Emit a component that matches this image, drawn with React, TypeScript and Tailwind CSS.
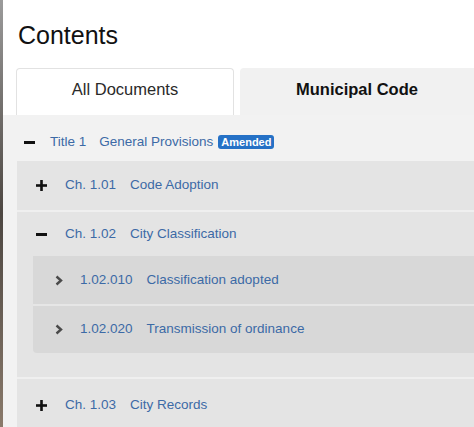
import React, { useState } from 'react';

type Section = { num: string; title: string };
type Chapter = { num: string; title: string; sections?: Section[] };

const chapters: Chapter[] = [
  { num: 'Ch. 1.01', title: 'Code Adoption' },
  {
    num: 'Ch. 1.02',
    title: 'City Classification',
    sections: [
      { num: '1.02.010', title: 'Classification adopted' },
      { num: '1.02.020', title: 'Transmission of ordinance' },
    ],
  },
  { num: 'Ch. 1.03', title: 'City Records' },
];

// header sizing per chapter row (the 2px divider sits on the wrapper)
const chapterHeights = ['h-[49px]', 'h-[44px]', 'h-[49px] pt-[3px]'];

function MinusIcon() {
  return (
    <svg width="11" height="11" viewBox="0 0 11 11" className="shrink-0">
      <rect x="0" y="4" width="11" height="3" fill="#111" />
    </svg>
  );
}

function PlusIcon() {
  return (
    <svg width="11" height="11" viewBox="0 0 11 11" className="shrink-0">
      <rect x="0" y="4.2" width="11" height="2.6" fill="#111" />
      <rect x="4.2" y="0" width="2.6" height="11" fill="#111" />
    </svg>
  );
}

function ChevronIcon() {
  return (
    <svg width="8" height="11" viewBox="0 0 8 11" className="shrink-0">
      <polyline points="1.5,1.5 6,5.5 1.5,9.5" fill="none" stroke="#4a4a4a" strokeWidth="2.4" />
    </svg>
  );
}

export default function App() {
  const [tab, setTab] = useState('code');
  const [open, setOpen] = useState<Record<string, boolean>>({ 'Ch. 1.02': true });

  return (
    <div className="flex h-[427px] w-[474px] overflow-hidden bg-white font-['Liberation_Sans',Arial,sans-serif]">
      <div className="w-[3px] shrink-0 bg-gradient-to-b from-[#9b9b9b] via-[#4d4742] to-[#8a7a6b]" />
      <div className="flex min-w-0 flex-1 flex-col">
        <h1 className="pl-[15px] pt-[19px] text-[25px] leading-[32px] text-[#111]">Contents</h1>

        <div className="mt-[17px] flex gap-[6px] pl-[13px]">
          <button
            onClick={() => setTab('all')}
            className="flex h-[47px] w-[218px] items-center justify-center rounded-t-[4px] border border-b-0 border-[#e2e2e2] bg-white pb-[6px] text-[16.5px] text-[#2a2a2a]"
          >
            All Documents
          </button>
          <button
            onClick={() => setTab('code')}
            className={`flex h-[47px] flex-1 items-center justify-center rounded-tl-[4px] bg-[#f1f1f1] pb-[5px] text-[16.5px] text-[#111] ${tab === 'code' ? 'font-bold' : ''}`}
          >
            Municipal Code
          </button>
        </div>

        <div className="flex-1 bg-[#f2f2f2]">
          <div className="flex h-[46px] items-center pl-[21px] pt-[8px] text-[13.5px] text-[#3c6aa6]">
            <span className="w-[26px]">
              <MinusIcon />
            </span>
            <span className="mr-[13px]">Title 1</span>
            <span>General Provisions</span>
            <span className="ml-[5px] rounded-[3px] bg-[#2571c6] px-[3px] text-[11px] font-bold leading-[14px] text-white">
              Amended
            </span>
          </div>

          <div className="ml-[14px] bg-[#e4e4e4]">
            {chapters.map((ch, i) => {
              const isOpen = !!open[ch.num];
              return (
                <div key={ch.num} className={i > 0 ? 'border-t-2 border-[#efefef]' : ''}>
                  <div
                    onClick={() => setOpen({ ...open, [ch.num]: !isOpen })}
                    className={`flex cursor-pointer items-center pl-[19px] text-[13.5px] text-[#3c6aa6] ${chapterHeights[i]}`}
                  >
                    <span className="w-[29px]">{isOpen ? <MinusIcon /> : <PlusIcon />}</span>
                    <span className="mr-[14px]">{ch.num}</span>
                    <span>{ch.title}</span>
                  </div>
                  {isOpen && ch.sections && (
                    <div className="pb-[24px]">
                      <div className="ml-[16px] rounded-bl-[4px] bg-[#d8d8d8]">
                        {ch.sections.map((s, j) => (
                          <div
                            key={s.num}
                            className={`flex items-center pl-[22px] text-[13.5px] text-[#3c6aa6] ${j > 0 ? 'h-[47px] box-content border-t-2 border-[#e6e6e6]' : 'h-[48px]'}`}
                          >
                            <span className="w-[25px]">
                              <ChevronIcon />
                            </span>
                            <span className="mr-[14px]">{s.num}</span>
                            <span>{s.title}</span>
                          </div>
                        ))}
                      </div>
                    </div>
                  )}
                </div>
              );
            })}
          </div>
        </div>
      </div>
    </div>
  );
}
